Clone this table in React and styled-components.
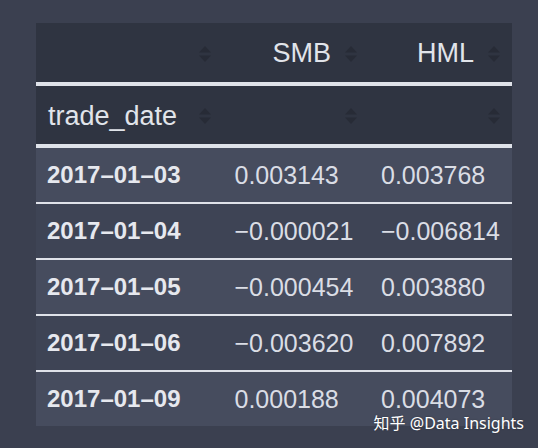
import styled, { createGlobalStyle } from "styled-components";

const GlobalStyle = createGlobalStyle`
  html, body {
    margin: 0;
    padding: 0;
    background: #3b4050;
  }
  body {
    font-family: "Liberation Sans", Arial, sans-serif;
    -webkit-font-smoothing: antialiased;
  }
`;

const columns = ["SMB", "HML"];

const rows = [
  ["2017–01–03", "0.003143", "0.003768"],
  ["2017–01–04", "−0.000021", "−0.006814"],
  ["2017–01–05", "−0.000454", "0.003880"],
  ["2017–01–06", "−0.003620", "0.007892"],
  ["2017–01–09", "0.000188", "0.004073"],
];

function SortIcon() {
  return (
    <SortSvg viewBox="0 0 14 18" aria-hidden="true">
      <path d="M7 1 L13 7.5 H1 Z" />
      <path d="M7 17 L13 10.5 H1 Z" />
    </SortSvg>
  );
}

export default function App() {
  return (
    <>
      <GlobalStyle />
      <Page>
        <Frame>
          <Grid>
            <HeadRow $height={59}>
              <HeadCell $align="end">
                <SortIcon />
              </HeadCell>
              {columns.map((c) => (
                <HeadCell key={c} $align="end">
                  <span>{c}</span>
                  <SortIcon />
                </HeadCell>
              ))}
            </HeadRow>
            <HeadRow $height={58}>
              <HeadCell $align="between">
                <span>trade_date</span>
                <SortIcon />
              </HeadCell>
              <HeadCell $align="end">
                <SortIcon />
              </HeadCell>
              <HeadCell $align="end">
                <SortIcon />
              </HeadCell>
            </HeadRow>
            {rows.map(([date, smb, hml], i) => (
              <BodyRow key={date} $odd={i % 2 === 0} $last={i === rows.length - 1}>
                <IndexCell>{date}</IndexCell>
                <Cell>{smb}</Cell>
                <Cell>{hml}</Cell>
              </BodyRow>
            ))}
          </Grid>
          <Watermark>知乎 @Data Insights</Watermark>
        </Frame>
      </Page>
    </>
  );
}

const Page = styled.div`
  width: 538px;
  height: 448px;
  padding: 23px 0 0 36px;
  box-sizing: border-box;
`;

const Frame = styled.div`
  position: relative;
  width: 476px;
`;

const Grid = styled.div`
  display: flex;
  flex-direction: column;
`;

const RowBase = styled.div`
  display: grid;
  grid-template-columns: 186.5px 146.5px 1fr;
  box-sizing: border-box;
`;

const HeadRow = styled(RowBase)`
  height: ${(p) => p.$height + 4}px;
  background: #2f3441;
  border-bottom: 4px solid #dfe2e9;
`;

const HeadCell = styled.div`
  display: flex;
  align-items: center;
  justify-content: ${(p) => (p.$align === "between" ? "space-between" : "flex-end")};
  gap: 13px;
  padding: 2px 11px 0 12px;
  font-size: 27px;
  color: #e1e4ea;
`;

const SortSvg = styled.svg`
  width: 14px;
  height: 18px;
  flex: none;
  fill: #252933;
  opacity: 0.75;
  filter: blur(0.6px);
`;

const BodyRow = styled(RowBase)`
  height: ${(p) => (p.$last ? 54 : 56)}px;
  background: ${(p) => (p.$odd ? "#464c5e" : "#3e4455")};
  border-bottom: ${(p) => (p.$last ? "none" : "2px solid #dfe2e9")};
`;

const Cell = styled.div`
  display: flex;
  align-items: center;
  padding-left: 12px;
  font-size: 25px;
  color: #dadde5;
  white-space: nowrap;
`;

const IndexCell = styled(Cell)`
  padding-left: 11px;
  font-size: 24px;
  font-weight: bold;
  color: #e6e8ee;
`;

const Watermark = styled.div`
  position: absolute;
  right: -12px;
  bottom: -8px;
  font-family: "Noto Sans", "Noto Sans CJK SC", sans-serif;
  font-size: 16px;
  color: #ffffff;
  white-space: nowrap;
  text-shadow: 0 0 2px rgba(0, 0, 0, 0.3);
`;
